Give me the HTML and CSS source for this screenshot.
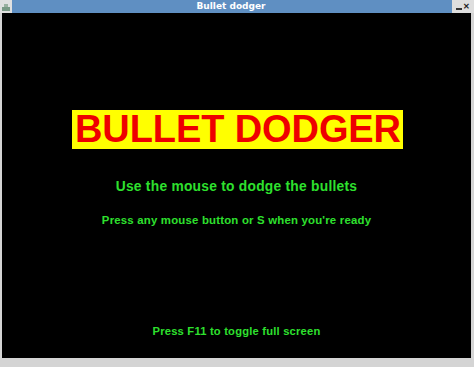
FILE: index.html
```html
<!DOCTYPE html>
<html>
<head>
<meta charset="utf-8">
<link rel="stylesheet" href="styles.css">
</head>
<body>
<div class="window">
  <div class="titlebar">
    <div class="appicon"><svg width="10" height="10" viewBox="0 0 10 10"><rect x="1" y="5" width="8" height="4" fill="#7a9a86"/><rect x="3" y="2" width="4" height="3" fill="#9ab0a0"/></svg></div>
    <div class="title">Bullet dodger</div>
    <div class="controls"><span class="min"></span><span class="close">✕</span></div>
  </div>
  <div class="content">
    <div class="banner">BULLET DODGER</div>
    <div class="line1">Use the mouse to dodge the bullets</div>
    <div class="line2">Press any mouse button or S when you're ready</div>
    <div class="spacer"></div>
    <div class="line3">Press F11 to toggle full screen</div>
  </div>
  <div class="bottom"></div>
</div>
</body>
</html>
```
FILE: styles.css
```css
html, body { margin: 0; padding: 0; }
body { width: 474px; height: 367px; overflow: hidden; background: #d4d4d4; font-family: "Liberation Sans", Arial, sans-serif; }
.window { display: flex; flex-direction: column; height: 367px; }
.titlebar { height: 13px; display: flex; background: #dcdcdc; }
.appicon { width: 12px; display: flex; align-items: center; justify-content: center; background: #e0e0e0; }
.title { flex: 1; background: #5f8fc2; color: #fff; font-family: "DejaVu Sans", sans-serif; font-weight: bold; font-size: 9px; line-height: 13px; text-align: center; padding-right: 2px; }
.controls { width: 22px; display: flex; align-items: center; justify-content: center; gap: 1px; background: #dedede; }
.min { width: 6px; height: 2px; background: #333; margin-top: 5px; }
.close { font-size: 8px; font-weight: bold; color: #222; line-height: 10px; }
.content { flex: 1; margin: 0 3px 0 2px; background: #000; display: flex; flex-direction: column; align-items: center; padding-top: 97px; }
.banner { background: #ffff00; color: #ee0000; font-weight: bold; font-size: 38px; line-height: 39px; height: 39px; padding: 0 2px 0 3px; letter-spacing: -0.1px; margin-left: 2px; }
.line1 { color: #2ee02e; font-weight: bold; font-size: 13.8px; line-height: 16px; margin-top: 30px; letter-spacing: 0.25px; }
.line2 { color: #2ee02e; font-weight: bold; font-size: 11.4px; line-height: 14px; margin-top: 18px; letter-spacing: 0.2px; }
.spacer { flex: 1; }
.line3 { color: #2ee02e; font-weight: bold; font-size: 11.2px; line-height: 14px; margin-bottom: 20px; letter-spacing: 0.2px; }
.bottom { height: 9px; }
```
